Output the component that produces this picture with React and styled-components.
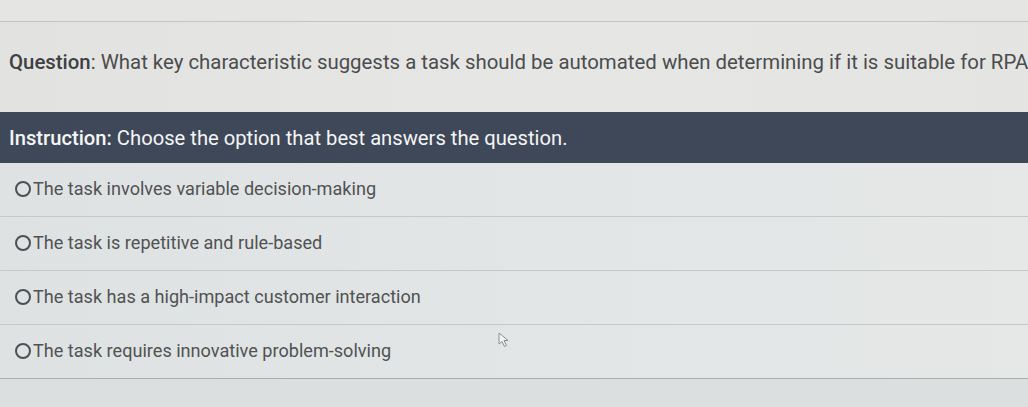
import React from "react";
import styled, { createGlobalStyle } from "styled-components";

const GlobalStyle = createGlobalStyle`
  body {
    margin: 0;
    font-family: Roboto, "Liberation Sans", sans-serif;
    background: #dfe1e0;
    overflow: hidden;
  }
`;

const Page = styled.div`
  width: 1028px;
  height: 407px;
  display: flex;
  flex-direction: column;
  position: relative;
  background: #e3e5e4;
`;

const TopStrip = styled.div`
  height: 21px;
  border-bottom: 1px solid #c3c5c4;
  background: #e5e6e4;
`;

const QuestionArea = styled.div`
  height: 90px;
  box-sizing: border-box;
  display: flex;
  align-items: center;
  padding: 0 0 10px 9px;
  font-size: 20.4px;
  color: #4b4c4d;
  white-space: nowrap;
  overflow: hidden;
  background: linear-gradient(90deg, #e2e3e1 0%, #e6e7e5 50%, #e4e5e3 100%);
`;

const Label = styled.span`
  font-weight: 500;
  color: ${(p) => p.color || "inherit"};
`;

const InstructionBar = styled.div`
  height: 51px;
  display: flex;
  align-items: center;
  padding-left: 9px;
  background: #3f4858;
  color: #f4f5f6;
  font-size: 20.2px;
  white-space: nowrap;
`;

const Options = styled.div`
  display: flex;
  flex-direction: column;
  background: linear-gradient(90deg, #dfe2e2 0%, #e3e6e6 60%, #e6e8e8 100%);
`;

const OptionRow = styled.label`
  height: 54px;
  box-sizing: border-box;
  display: flex;
  align-items: center;
  gap: 2px;
  padding: 0 0 2px 15px;
  border-bottom: 1px solid ${(p) => (p.last ? "#a9acac" : "#c6c9c9")};
  font-size: 18.1px;
  color: #505253;
  cursor: pointer;
`;

const Radio = styled.span`
  width: 12px;
  height: 12px;
  border: 2px solid #4a5054;
  border-radius: 50%;
  flex: none;
`;

const Bottom = styled.div`
  flex: 1;
  background: #dcdfdf;
`;

const Pointer = styled.svg`
  position: absolute;
  left: 498px;
  top: 332px;
`;

const options = [
  "The task involves variable decision-making",
  "The task is repetitive and rule-based",
  "The task has a high-impact customer interaction",
  "The task requires innovative problem-solving",
];

export default function App() {
  return (
    <Page>
      <GlobalStyle />
      <TopStrip />
      <QuestionArea>
        <Label color="#3f4042">Question</Label>: What key characteristic
        suggests a task should be automated when determining if it is suitable
        for RPA
      </QuestionArea>
      <InstructionBar>
        <Label>Instruction:</Label>&nbsp;Choose the option that best answers
        the question.
      </InstructionBar>
      <Options>
        {options.map((text, i) => (
          <OptionRow key={text} last={i === options.length - 1}>
            <Radio />
            {text}
          </OptionRow>
        ))}
      </Options>
      <Bottom />
      <Pointer width="14" height="16" viewBox="0 0 14 16">
        <path
          d="M1 1 L1 12 L4 9.5 L6.5 14.5 L8.5 13.5 L6 8.5 L10 8.5 Z"
          fill="#f2f3f3"
          stroke="#8a8d90"
          strokeWidth="1"
          strokeLinejoin="round"
        />
      </Pointer>
    </Page>
  );
}
